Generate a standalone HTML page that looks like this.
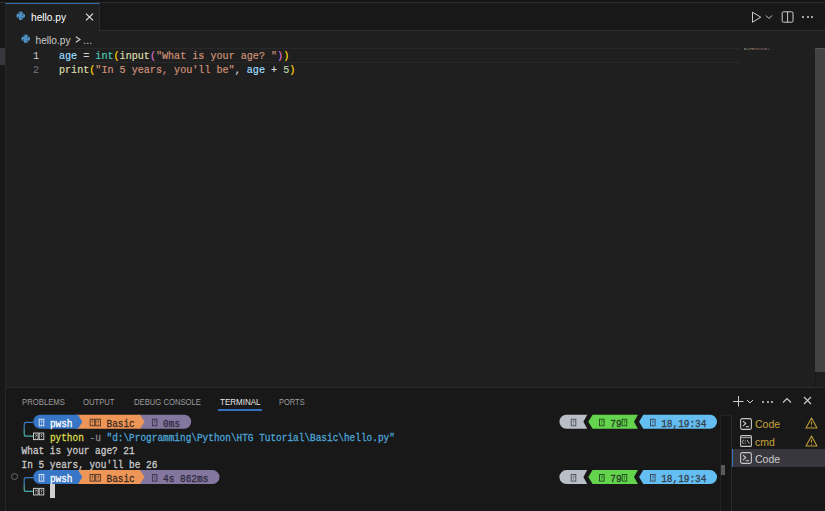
<!DOCTYPE html>
<html><head><meta charset="utf-8">
<style>
*{margin:0;padding:0;box-sizing:border-box}
html,body{width:825px;height:511px;overflow:hidden;background:#181818;font-family:"Liberation Sans",sans-serif;color:#ccc}
.a{position:absolute}
.mono{font-family:"Liberation Mono",monospace;white-space:pre}
#topband{left:0;top:0;width:825px;height:3px;background:#141414}
#tabbar{left:0;top:2px;width:825px;height:29px;background:#181818;border-top:1px solid #2b2b2b;border-bottom:1px solid #2b2b2b}
#tab{left:5px;top:3px;width:95px;height:28px;background:#1f1f1f;border-top:1.2px solid #346cb4;border-right:1px solid #2b2b2b;border-left:1px solid #262626}
#leftstrip{left:0;top:3px;width:5px;height:508px;background:#181818}
#leftborder{left:5px;top:30px;width:1px;height:481px;background:#272727}
#lefthl{left:0;top:48px;width:5px;height:17px;background:#37373d}
#editor{left:6px;top:31px;width:819px;height:356px;background:#1f1f1f}
#panel{left:6px;top:387px;width:819px;height:124px;background:#181818;border-top:1px solid #2b2b2b}
.tabtxt{font-size:10.2px;color:#fff}
.code{font-size:10.1px;line-height:14px;-webkit-text-stroke:0.2px currentColor}
.ln{font-size:10.1px;color:#6e7681}
.v{color:#9cdcfe}.f{color:#dcdcaa}.c{color:#4ec9b0}.s{color:#ce9178}.o{color:#d4d4d4}.n{color:#b5cea8}
.b1{color:#ffd700}.b2{color:#da70d6}
.ptab{font-size:9.6px;color:#9d9d9d;top:396px;transform-origin:0 0;white-space:nowrap}
.term{font-size:9.43px;line-height:13.83px;color:#cccccc;-webkit-text-stroke:0.25px currentColor;transform-origin:0 0;transform:translateY(1.55px) scaleY(1.12)}
</style></head><body>
<div class="a" id="topband"></div>
<div class="a" id="tabbar"></div>
<div class="a" id="tab"></div>
<div class="a" id="leftstrip"></div>
<div class="a" id="leftborder"></div>
<div class="a" id="lefthl"></div>
<div class="a" id="editor"></div>
<div class="a" id="panel"></div>

<!-- tab -->
<svg class="a" style="left:15.9px;top:11.4px" width="9.5" height="9.5" viewBox="0 0 16 16"><path fill="#4e93c6" d="M7.9 1C4.3 1 4.5 2.6 4.5 2.6v1.6h3.5v.5H3.1S.8 4.4.8 8s2 3.5 2 3.5h1.2V9.8s-.1-2 2-2h3.4s1.9 0 1.9-1.9V2.9S11.6 1 7.9 1zM6 2.1c.3 0 .6.3.6.6S6.3 3.3 6 3.3s-.6-.3-.6-.6.3-.6.6-.6zM8.1 15c3.6 0 3.4-1.6 3.4-1.6v-1.6H8v-.5h4.9s2.3.3 2.3-3.3-2-3.5-2-3.5h-1.2v1.7s.1 2-2 2H6.6s-1.9 0-1.9 1.9v3.1S4.4 15 8.1 15zm1.9-1.1c-.3 0-.6-.3-.6-.6s.3-.6.6-.6.6.3.6.6-.3.6-.6.6z"/></svg>
<div class="a tabtxt" style="left:31px;top:12px">hello.py</div>
<svg class="a" style="left:84.5px;top:13px" width="9" height="8" viewBox="0 0 9 8"><path d="M1 0.6L8 7.4M8 0.6L1 7.4" stroke="#e0e0e0" stroke-width="1.2"/></svg>

<!-- editor actions -->
<svg class="a" style="left:751px;top:11px" width="11" height="12" viewBox="0 0 11 12"><path d="M1.5 1.2L9.8 6.2L1.5 11.2Z" fill="none" stroke="#ccc" stroke-width="1" stroke-linejoin="round"/></svg>
<svg class="a" style="left:765px;top:14px" width="8" height="6" viewBox="0 0 8 6"><path d="M1 1.5L4 4.5L7 1.5" fill="none" stroke="#ccc" stroke-width="1"/></svg>
<svg class="a" style="left:781px;top:11px" width="13" height="12" viewBox="0 0 13 12"><rect x="1.2" y="0.8" width="10.8" height="10.4" rx="1.3" fill="none" stroke="#ccc" stroke-width="1"/><path d="M6.6 0.8V11.2" stroke="#ccc" stroke-width="1"/></svg>
<div class="a" style="left:802.4px;top:16.2px;width:2.1px;height:2.1px;border-radius:50%;background:#d0d0d0"></div>
<div class="a" style="left:806.6px;top:16.2px;width:2.1px;height:2.1px;border-radius:50%;background:#d0d0d0"></div>
<div class="a" style="left:811.1px;top:16.2px;width:2.1px;height:2.1px;border-radius:50%;background:#d0d0d0"></div>

<!-- breadcrumbs -->
<svg class="a" style="left:21px;top:33.8px" width="9.5" height="9.5" viewBox="0 0 16 16"><path fill="#4e93c6" d="M7.9 1C4.3 1 4.5 2.6 4.5 2.6v1.6h3.5v.5H3.1S.8 4.4.8 8s2 3.5 2 3.5h1.2V9.8s-.1-2 2-2h3.4s1.9 0 1.9-1.9V2.9S11.6 1 7.9 1zM6 2.1c.3 0 .6.3.6.6S6.3 3.3 6 3.3s-.6-.3-.6-.6.3-.6.6-.6zM8.1 15c3.6 0 3.4-1.6 3.4-1.6v-1.6H8v-.5h4.9s2.3.3 2.3-3.3-2-3.5-2-3.5h-1.2v1.7s.1 2-2 2H6.6s-1.9 0-1.9 1.9v3.1S4.4 15 8.1 15zm1.9-1.1c-.3 0-.6-.3-.6-.6s.3-.6.6-.6.6.3.6.6-.3.6-.6.6z"/></svg>
<div class="a" style="left:35.5px;top:35px;font-size:10.2px;color:#cccccc">hello.py</div>
<svg class="a" style="left:74.5px;top:36.2px" width="6" height="7" viewBox="0 0 6 7"><path d="M0.8 0.7L5 3.5L0.8 6.3" fill="none" stroke="#d0d0d0" stroke-width="1.1"/></svg>
<div class="a" style="left:83.3px;top:33.6px;font-size:10.5px;color:#cccccc">...</div>

<!-- current line highlight -->
<div class="a" style="left:59px;top:48px;width:680.5px;height:15px;border:1px solid #282828;border-right:none"></div>
<div class="a ln mono" style="left:33px;top:51px;color:#cccccc">1</div>
<div class="a ln mono" style="left:33px;top:65px">2</div>
<div class="a code mono" style="left:59px;top:50px"><span class="v">age</span> <span class="o">=</span> <span class="c">int</span><span class="b1">(</span><span class="f">input</span><span class="b2">(</span><span class="s">"What is your age? "</span><span class="b2">)</span><span class="b1">)</span></div>
<div class="a code mono" style="left:59px;top:64px"><span class="f">print</span><span class="b1">(</span><span class="s">"In 5 years, you'll be"</span><span class="o">, </span><span class="v">age</span> <span class="o">+</span> <span class="n">5</span><span class="b1">)</span></div>

<!-- minimap -->
<div class="a mono" style="left:744px;top:47.7px;font-size:1.1px;line-height:1.35px;font-weight:bold;opacity:.85"><span class="v">age</span> <span class="o">=</span> <span class="c">int</span><span class="b1">(</span><span class="f">input</span><span class="b2">(</span><span class="s">"What is your age? "</span><span class="b2">)</span><span class="b1">)</span>
<span class="f">print</span><span class="b1">(</span><span class="s">"In 5 years, you'll be"</span><span class="o">, </span><span class="v">age</span> <span class="o">+</span> <span class="n">5</span><span class="b1">)</span></div>

<!-- scrollbar -->
<div class="a" style="left:815px;top:48px;width:10px;height:324px;background:#434343;border-top:1px solid #575757"></div>
<div class="a" style="left:815px;top:372px;width:1px;height:15px;background:#171717"></div>

<!-- panel tabs -->
<div class="a ptab" style="left:21.5px;transform:scaleX(0.806)">PROBLEMS</div>
<div class="a ptab" style="left:83px;transform:scaleX(0.80)">OUTPUT</div>
<div class="a ptab" style="left:134.3px;transform:scaleX(0.80)">DEBUG CONSOLE</div>
<div class="a ptab" style="left:219.8px;color:#e7e7e7;transform:scaleX(0.835)">TERMINAL</div>
<div class="a" style="left:218px;top:409.3px;width:44px;height:1.4px;background:#3170c2"></div>
<div class="a ptab" style="left:279.4px;transform:scaleX(0.78)">PORTS</div>

<!--RP-->
<!-- terminal scrollbar column -->
<div class="a" style="left:720px;top:415px;width:11px;height:96px;background:#161616;border-left:1px solid #232323;border-top:1px solid #232323"></div>
<div class="a" style="left:721px;top:465px;width:3.5px;height:10px;background:#5a5a5a"></div>
<div class="a" style="left:731px;top:415px;width:1px;height:96px;background:#2b2b2b"></div>
<!-- selected row -->
<div class="a" style="left:732px;top:449px;width:93px;height:18px;background:#37373d"></div>
<div class="a" style="left:732px;top:449px;width:1px;height:18px;background:#3a74bc"></div>
<!-- icons -->
<svg class="a" style="left:740px;top:418px" width="12" height="12" viewBox="0 0 12 12"><rect x="0.6" y="0.6" width="10.8" height="10.8" rx="1.6" fill="none" stroke="#c5c5c5" stroke-width="1.1"/><path d="M2.9 3.1L5.7 5.6L2.9 8.1" fill="none" stroke="#c5c5c5" stroke-width="1.25"/><path d="M5.8 8.7H9.1" stroke="#c5c5c5" stroke-width="1.1"/></svg>
<svg class="a" style="left:740px;top:435px" width="12" height="12" viewBox="0 0 12 12"><rect x="0.6" y="0.6" width="10.8" height="10.8" rx="1" fill="none" stroke="#c5c5c5" stroke-width="1.1"/><path d="M0.6 2.7H11.4" stroke="#c5c5c5" stroke-width="0.9"/><path d="M4.3 5.3A1.5 1.6 0 1 0 4.3 8.3" fill="none" stroke="#c5c5c5" stroke-width="0.9"/><circle cx="5.6" cy="5.9" r="0.5" fill="#c5c5c5"/><circle cx="5.6" cy="7.9" r="0.5" fill="#c5c5c5"/><path d="M7.1 4.9L9.3 8.7" stroke="#c5c5c5" stroke-width="0.9"/></svg>
<svg class="a" style="left:740px;top:452px" width="12" height="12" viewBox="0 0 12 12"><rect x="0.6" y="0.6" width="10.8" height="10.8" rx="1.6" fill="none" stroke="#c5c5c5" stroke-width="1.1"/><path d="M2.9 3.1L5.7 5.6L2.9 8.1" fill="none" stroke="#c5c5c5" stroke-width="1.25"/><path d="M5.8 8.7H9.1" stroke="#c5c5c5" stroke-width="1.1"/></svg>
<div class="a" style="left:755px;top:418px;font-size:10.5px;color:#c8a43a">Code</div>
<div class="a" style="left:755px;top:435.5px;font-size:10.5px;color:#c8a43a">cmd</div>
<div class="a" style="left:755px;top:453.3px;font-size:10.5px;color:#cccccc">Code</div>
<svg class="a" style="left:805px;top:417px" width="13" height="12" viewBox="0 0 13 12"><path d="M6.5 1L12 11H1Z" fill="none" stroke="#bb9c38" stroke-width="1.1" stroke-linejoin="round"/><path d="M6.5 4.5V7.8M6.5 9V9.8" stroke="#bb9c38" stroke-width="1.1"/></svg>
<svg class="a" style="left:805px;top:434.5px" width="13" height="12" viewBox="0 0 13 12"><path d="M6.5 1L12 11H1Z" fill="none" stroke="#bb9c38" stroke-width="1.1" stroke-linejoin="round"/><path d="M6.5 4.5V7.8M6.5 9V9.8" stroke="#bb9c38" stroke-width="1.1"/></svg>
<!-- panel toolbar -->
<svg class="a" style="left:732px;top:395px" width="12" height="12" viewBox="0 0 12 12"><path d="M6.5 1V11.5M1 6.5H11.5" stroke="#cccccc" stroke-width="1"/></svg>
<svg class="a" style="left:746px;top:399px" width="8" height="5" viewBox="0 0 8 5"><path d="M1 1L4 4L7 1" fill="none" stroke="#cccccc" stroke-width="1"/></svg>
<div class="a" style="left:762.2px;top:400.8px;width:2.1px;height:2.1px;border-radius:50%;background:#d0d0d0"></div>
<div class="a" style="left:766.6px;top:400.8px;width:2.1px;height:2.1px;border-radius:50%;background:#d0d0d0"></div>
<div class="a" style="left:771px;top:400.8px;width:2.1px;height:2.1px;border-radius:50%;background:#d0d0d0"></div>
<svg class="a" style="left:782px;top:397px" width="10" height="7" viewBox="0 0 10 7"><path d="M1 5.5L5 1.5L9 5.5" fill="none" stroke="#cccccc" stroke-width="1.1"/></svg>
<svg class="a" style="left:803px;top:396px" width="9" height="9" viewBox="0 0 9 9"><path d="M1 1L8 8M8 1L1 8" stroke="#cccccc" stroke-width="1.1"/></svg>
<!--/RP-->
<!--TERM-->
<svg class="a" style="left:0;top:0" width="825" height="511"><defs><linearGradient id="bdg" x1="0" y1="0" x2="0" y2="1"><stop offset="0.45" stop-color="#3a7cc6"/><stop offset="0.55" stop-color="#4aaaa8"/></linearGradient></defs><path d="M33.2 422.40H26.20q-2 0-2 2V434.13q0 2 2 2H33.2" fill="none" stroke="url(#bdg)" stroke-width="1.2"/><path d="M138 414.80H184.24a7.0 7.0 0 0 1 0 14.0H138Z" fill="#83779f"/><path d="M76 414.80H140L144.5 421.80L140 428.80H76Z" fill="#ee9658"/><path d="M40.20 414.80H78L82.3 421.80L78 428.80H40.20a7.0 7.0 0 0 1 0 -14.0Z" fill="#3776c6"/><rect x="39.18" y="419.20" width="4.6" height="6.6" fill="none" stroke="#e8eef8" stroke-width="0.9"/><path d="M40.78 421.10q0.7-0.9 1.3 0q0.2 0.9-0.7 1.4v0.7M41.48 424.20v0.6" fill="none" stroke="#e8eef8" stroke-width="0.8"/><rect x="90.12" y="419.20" width="4.6" height="6.6" fill="none" stroke="#4a3322" stroke-width="0.9"/><path d="M91.72 421.10q0.7-0.9 1.3 0q0.2 0.9-0.7 1.4v0.7M92.42 424.20v0.6" fill="none" stroke="#4a3322" stroke-width="0.8"/><rect x="95.78" y="419.20" width="4.6" height="6.6" fill="none" stroke="#4a3322" stroke-width="0.9"/><path d="M97.38 421.10q0.7-0.9 1.3 0q0.2 0.9-0.7 1.4v0.7M98.08 424.20v0.6" fill="none" stroke="#4a3322" stroke-width="0.8"/><rect x="152.38" y="419.20" width="4.6" height="6.6" fill="none" stroke="#3a3346" stroke-width="0.9"/><path d="M153.98 421.10q0.7-0.9 1.3 0q0.2 0.9-0.7 1.4v0.7M154.68 424.20v0.6" fill="none" stroke="#3a3346" stroke-width="0.8"/><rect x="33.52" y="433.03" width="4.6" height="6.6" fill="none" stroke="#d8d8d8" stroke-width="0.9"/><path d="M35.12 434.93q0.7-0.9 1.3 0q0.2 0.9-0.7 1.4v0.7M35.82 438.03v0.6" fill="none" stroke="#d8d8d8" stroke-width="0.8"/><rect x="39.18" y="433.03" width="4.6" height="6.6" fill="none" stroke="#d8d8d8" stroke-width="0.9"/><path d="M40.78 434.93q0.7-0.9 1.3 0q0.2 0.9-0.7 1.4v0.7M41.48 438.03v0.6" fill="none" stroke="#d8d8d8" stroke-width="0.8"/><path d="M33.2 477.72H26.20q-2 0-2 2V489.45q0 2 2 2H33.2" fill="none" stroke="url(#bdg)" stroke-width="1.2"/><path d="M138 470.12H212.54a7.0 7.0 0 0 1 0 14.0H138Z" fill="#83779f"/><path d="M76 470.12H140L144.5 477.12L140 484.12H76Z" fill="#ee9658"/><path d="M40.20 470.12H78L82.3 477.12L78 484.12H40.20a7.0 7.0 0 0 1 0 -14.0Z" fill="#3776c6"/><rect x="39.18" y="474.52" width="4.6" height="6.6" fill="none" stroke="#e8eef8" stroke-width="0.9"/><path d="M40.78 476.42q0.7-0.9 1.3 0q0.2 0.9-0.7 1.4v0.7M41.48 479.52v0.6" fill="none" stroke="#e8eef8" stroke-width="0.8"/><rect x="90.12" y="474.52" width="4.6" height="6.6" fill="none" stroke="#4a3322" stroke-width="0.9"/><path d="M91.72 476.42q0.7-0.9 1.3 0q0.2 0.9-0.7 1.4v0.7M92.42 479.52v0.6" fill="none" stroke="#4a3322" stroke-width="0.8"/><rect x="95.78" y="474.52" width="4.6" height="6.6" fill="none" stroke="#4a3322" stroke-width="0.9"/><path d="M97.38 476.42q0.7-0.9 1.3 0q0.2 0.9-0.7 1.4v0.7M98.08 479.52v0.6" fill="none" stroke="#4a3322" stroke-width="0.8"/><rect x="152.38" y="474.52" width="4.6" height="6.6" fill="none" stroke="#3a3346" stroke-width="0.9"/><path d="M153.98 476.42q0.7-0.9 1.3 0q0.2 0.9-0.7 1.4v0.7M154.68 479.52v0.6" fill="none" stroke="#3a3346" stroke-width="0.8"/><rect x="33.52" y="488.35" width="4.6" height="6.6" fill="none" stroke="#d8d8d8" stroke-width="0.9"/><path d="M35.12 490.25q0.7-0.9 1.3 0q0.2 0.9-0.7 1.4v0.7M35.82 493.35v0.6" fill="none" stroke="#d8d8d8" stroke-width="0.8"/><rect x="39.18" y="488.35" width="4.6" height="6.6" fill="none" stroke="#d8d8d8" stroke-width="0.9"/><path d="M40.78 490.25q0.7-0.9 1.3 0q0.2 0.9-0.7 1.4v0.7M41.48 493.35v0.6" fill="none" stroke="#d8d8d8" stroke-width="0.8"/><path d="M566.40 414.80H587.2L583.4 421.80L587.2 428.80H566.40a7.0 7.0 0 0 1 0 -14.0Z" fill="#b9bfc6"/><path d="M592.6 414.80H637.9L634 421.80L637.9 428.80H592.6L588.3 421.80Z" fill="#64d44e"/><path d="M643.3 414.80H710.00a7.0 7.0 0 0 1 0 14.0H643.3L639.1 421.80Z" fill="#64bef2"/><rect x="571.22" y="419.20" width="4.6" height="6.6" fill="none" stroke="#4a4f58" stroke-width="0.9"/><path d="M572.82 421.10q0.7-0.9 1.3 0q0.2 0.9-0.7 1.4v0.7M573.52 424.20v0.6" fill="none" stroke="#4a4f58" stroke-width="0.8"/><rect x="599.52" y="419.20" width="4.6" height="6.6" fill="none" stroke="#1f4a1a" stroke-width="0.9"/><path d="M601.12 421.10q0.7-0.9 1.3 0q0.2 0.9-0.7 1.4v0.7M601.82 424.20v0.6" fill="none" stroke="#1f4a1a" stroke-width="0.8"/><rect x="622.16" y="419.20" width="4.6" height="6.6" fill="none" stroke="#1f4a1a" stroke-width="0.9"/><path d="M623.76 421.10q0.7-0.9 1.3 0q0.2 0.9-0.7 1.4v0.7M624.46 424.20v0.6" fill="none" stroke="#1f4a1a" stroke-width="0.8"/><rect x="650.46" y="419.20" width="4.6" height="6.6" fill="none" stroke="#3a4250" stroke-width="0.9"/><path d="M652.06 421.10q0.7-0.9 1.3 0q0.2 0.9-0.7 1.4v0.7M652.76 424.20v0.6" fill="none" stroke="#3a4250" stroke-width="0.8"/><path d="M566.40 470.12H587.2L583.4 477.12L587.2 484.12H566.40a7.0 7.0 0 0 1 0 -14.0Z" fill="#b9bfc6"/><path d="M592.6 470.12H637.9L634 477.12L637.9 484.12H592.6L588.3 477.12Z" fill="#64d44e"/><path d="M643.3 470.12H710.00a7.0 7.0 0 0 1 0 14.0H643.3L639.1 477.12Z" fill="#64bef2"/><rect x="571.22" y="474.52" width="4.6" height="6.6" fill="none" stroke="#4a4f58" stroke-width="0.9"/><path d="M572.82 476.42q0.7-0.9 1.3 0q0.2 0.9-0.7 1.4v0.7M573.52 479.52v0.6" fill="none" stroke="#4a4f58" stroke-width="0.8"/><rect x="599.52" y="474.52" width="4.6" height="6.6" fill="none" stroke="#1f4a1a" stroke-width="0.9"/><path d="M601.12 476.42q0.7-0.9 1.3 0q0.2 0.9-0.7 1.4v0.7M601.82 479.52v0.6" fill="none" stroke="#1f4a1a" stroke-width="0.8"/><rect x="622.16" y="474.52" width="4.6" height="6.6" fill="none" stroke="#1f4a1a" stroke-width="0.9"/><path d="M623.76 476.42q0.7-0.9 1.3 0q0.2 0.9-0.7 1.4v0.7M624.46 479.52v0.6" fill="none" stroke="#1f4a1a" stroke-width="0.8"/><rect x="650.46" y="474.52" width="4.6" height="6.6" fill="none" stroke="#3a4250" stroke-width="0.9"/><path d="M652.06 476.42q0.7-0.9 1.3 0q0.2 0.9-0.7 1.4v0.7M652.76 479.52v0.6" fill="none" stroke="#3a4250" stroke-width="0.8"/></svg>
<div class="a term mono" style="left:49.90px;top:414.80px;color:#ffffff">pwsh</div>
<div class="a term mono" style="left:106.50px;top:414.80px;color:#3d2b1e">Basic</div>
<div class="a term mono" style="left:163.10px;top:414.80px;color:#302a3c">0ms</div>
<div class="a term mono" style="left:610.24px;top:414.80px;color:#253a22">79</div>
<div class="a term mono" style="left:661.18px;top:414.80px;color:#353d4a">18,19:34</div>
<div class="a term mono" style="left:49.90px;top:470.12px;color:#ffffff">pwsh</div>
<div class="a term mono" style="left:106.50px;top:470.12px;color:#3d2b1e">Basic</div>
<div class="a term mono" style="left:163.10px;top:470.12px;color:#302a3c">4s 862ms</div>
<div class="a term mono" style="left:610.24px;top:470.12px;color:#253a22">79</div>
<div class="a term mono" style="left:661.18px;top:470.12px;color:#353d4a">18,19:34</div>
<div class="a term mono" style="left:49.90px;top:428.63px;color:#dcdc4e">python</div>
<div class="a term mono" style="left:89.52px;top:428.63px;color:#8c8c8c">-u</div>
<div class="a term mono" style="left:106.50px;top:428.63px;color:#4da6d8">"d:\Programming\Python\HTG Tutorial\Basic\hello.py"</div>
<div class="a term mono" style="left:21.60px;top:442.46px;color:#cccccc">What is your age? 21</div>
<div class="a term mono" style="left:21.60px;top:456.29px;color:#cccccc">In 5 years, you'll be 26</div>
<div class="a" style="left:49.6px;top:483.95px;width:5.7px;height:13.8px;background:#d0d0d0"></div>
<div class="a" style="left:10.9px;top:473.4px;width:7px;height:7px;border-radius:50%;border:1.5px solid #6a6a6a"></div>
<!--/TERM-->
</body></html>
